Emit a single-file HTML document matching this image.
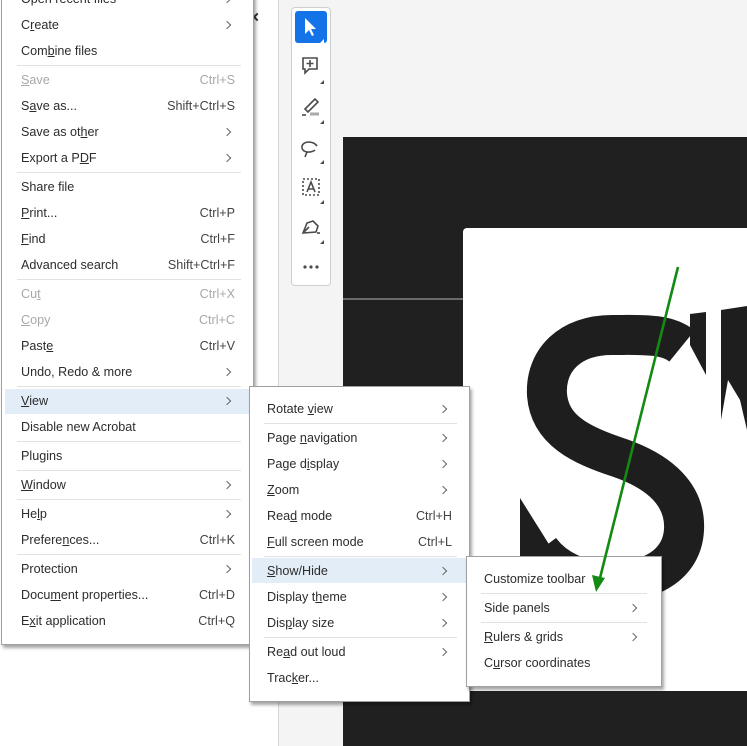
<!DOCTYPE html>
<html><head><meta charset="utf-8"><style>
*{margin:0;padding:0;box-sizing:border-box}
body{width:747px;height:746px;overflow:hidden;position:relative;background:#f4f4f4;font-family:"Liberation Sans",sans-serif;font-size:12.6px;color:#2c2c2c}
.abs{position:absolute}
.menu{position:absolute;background:#fff;border:1px solid #a0a0a0;box-shadow:2px 3px 3px rgba(0,0,0,.35)}
.r{position:absolute;left:0;right:0;height:18px;line-height:18px;white-space:nowrap}
.r .t{position:absolute}
.r .k{position:absolute;color:#444}
.r .c{position:absolute;width:6px;height:6px;border-right:1.6px solid #666;border-top:1.6px solid #666;transform:rotate(45deg);top:6px}
.d{color:#a8a8a8}
.d .k{color:#a8a8a8}
.s{position:absolute;height:1px;background:#e2e2e2}
.hl{position:absolute;background:#e3edf8}
u{text-decoration:underline;text-underline-offset:1px}
</style></head><body>
<div class="abs" style="left:0;top:0;width:279px;height:746px;background:#fff;border-right:1px solid #d6d6d6"></div>
<div class="abs" style="left:254px;top:14px;width:6px;height:6px;border-left:2px solid #333;border-bottom:2px solid #333;transform:rotate(45deg)"></div>

<div class="abs" style="left:343px;top:137px;width:404px;height:609px;background:#202020"></div>
<div class="abs" style="left:343px;top:298px;width:120px;height:2px;background:#6a6a6a"></div>
<div class="abs" style="left:463px;top:228px;width:284px;height:463px;background:#fff;border-radius:4px 0 0 3px"></div>
<svg class="abs" style="left:0;top:0" width="747" height="746">
<path d="M682,346 C666,333 640,335 612,335 C570,335 545,360 547,395 C550,430 580,445 620,458 C660,472 686,495 684,530 C682,565 650,582 612,582 C580,582 555,570 540,550" fill="none" stroke="#1e1e1e" stroke-width="40"/>
<path d="M520,498 L520,565 L562,565 Z" fill="#1e1e1e"/>
<path d="M690,314 L706,312 L706,375 L690,345 Z" fill="#1e1e1e"/>
<path d="M721,310 L747,306 L747,430 L740,400 L728,380 L721,420 Z" fill="#1e1e1e"/>
</svg>

<div class="abs" style="left:291px;top:7px;width:40px;height:279px;background:#fff;border:1px solid #cfcfcf;border-radius:4px"></div>
<div class="abs" style="left:295px;top:11px;width:32px;height:32px;background:#1473e6;border-radius:3px"></div>
<svg class="abs" style="left:291px;top:7px" width="40" height="279" fill="none" stroke="#4b4b4b" stroke-width="1.6">
<path d="M14,11 L14,27 L18,23 L21,29 L23,28 L20,22 L25,22 Z" fill="#fff" stroke="none"/>
<path d="M33,32 L33,36 L29,36 Z" fill="#fff" stroke="none"/>
<path d="M12,51 h14 v11 h-8 l-4,4 v-4 h-2 z"/><path d="M19,53 v7 M15.5,56.5 h7"/>
<path d="M33,73 L33,77 L29,77 Z" fill="#4b4b4b" stroke="none"/>
<path d="M14,102 L24,92 L27,95 L17,105 Z"/><path d="M11,108 h4" /><path d="M19,107 h9" stroke="#aaa" stroke-width="3"/>
<path d="M33,113 L33,117 L29,117 Z" fill="#4b4b4b" stroke="none"/>
<path d="M26,139 C22,133 10,134 11,141 C12,146 20,146 24,143 M16,145 L14,150"/>
<path d="M33,153 L33,157 L29,157 Z" fill="#4b4b4b" stroke="none"/>
<path d="M12,172 h16 v16 h-16 z" stroke-dasharray="2 2"/><path d="M16,185 L20,175 L24,185 M17.5,182 h5"/>
<path d="M33,193 L33,197 L29,197 Z" fill="#4b4b4b" stroke="none"/>
<path d="M12,226 L16,216 L22,214 L27,219 L25,225 Z M12,226 L18,220"/><path d="M26,226 l3,0"/>
<path d="M33,233 L33,237 L29,237 Z" fill="#4b4b4b" stroke="none"/>
<circle cx="14" cy="260" r=".8" fill="#4b4b4b"/><circle cx="20" cy="260" r=".8" fill="#4b4b4b"/><circle cx="26" cy="260" r=".8" fill="#4b4b4b"/>
</svg>

<div class="menu" style="left:1px;top:-20px;width:253px;height:665px">
<div style="position:relative;top:20px">
<div class="r" style="top:-11px"><span class="t" style="left:19px">Open recent files</span><i class="c" style="left:222px"></i></div>
<div class="r" style="top:15px"><span class="t" style="left:19px">C<u>r</u>eate</span><i class="c" style="left:222px"></i></div>
<div class="r" style="top:41px"><span class="t" style="left:19px">Com<u>b</u>ine files</span></div>
<div class="s" style="left:15px;width:224px;top:64px"></div>
<div class="r d" style="top:70px"><span class="t" style="left:19px"><u>S</u>ave</span><span class="k" style="right:18px">Ctrl+S</span></div>
<div class="r" style="top:96px"><span class="t" style="left:19px">S<u>a</u>ve as...</span><span class="k" style="right:18px">Shift+Ctrl+S</span></div>
<div class="r" style="top:122px"><span class="t" style="left:19px">Save as ot<u>h</u>er</span><i class="c" style="left:222px"></i></div>
<div class="r" style="top:148px"><span class="t" style="left:19px">Export a P<u>D</u>F</span><i class="c" style="left:222px"></i></div>
<div class="s" style="left:15px;width:224px;top:171px"></div>
<div class="r" style="top:177px"><span class="t" style="left:19px">Share file</span></div>
<div class="r" style="top:203px"><span class="t" style="left:19px"><u>P</u>rint...</span><span class="k" style="right:18px">Ctrl+P</span></div>
<div class="r" style="top:229px"><span class="t" style="left:19px"><u>F</u>ind</span><span class="k" style="right:18px">Ctrl+F</span></div>
<div class="r" style="top:255px"><span class="t" style="left:19px">Advanced search</span><span class="k" style="right:18px">Shift+Ctrl+F</span></div>
<div class="s" style="left:15px;width:224px;top:278px"></div>
<div class="r d" style="top:284px"><span class="t" style="left:19px">Cu<u>t</u></span><span class="k" style="right:18px">Ctrl+X</span></div>
<div class="r d" style="top:310px"><span class="t" style="left:19px"><u>C</u>opy</span><span class="k" style="right:18px">Ctrl+C</span></div>
<div class="r" style="top:336px"><span class="t" style="left:19px">Past<u>e</u></span><span class="k" style="right:18px">Ctrl+V</span></div>
<div class="r" style="top:362px"><span class="t" style="left:19px">Undo, Redo &amp; more</span><i class="c" style="left:222px"></i></div>
<div class="s" style="left:15px;width:224px;top:385px"></div>
<div class="hl" style="left:3px;width:248px;top:388px;height:25px"></div>
<div class="r" style="top:391px"><span class="t" style="left:19px"><u>V</u>iew</span><i class="c" style="left:222px"></i></div>
<div class="r" style="top:417px"><span class="t" style="left:19px">Disable new Acrobat</span></div>
<div class="s" style="left:15px;width:224px;top:440px"></div>
<div class="r" style="top:446px"><span class="t" style="left:19px">Plugins</span></div>
<div class="s" style="left:15px;width:224px;top:469px"></div>
<div class="r" style="top:475px"><span class="t" style="left:19px"><u>W</u>indow</span><i class="c" style="left:222px"></i></div>
<div class="s" style="left:15px;width:224px;top:498px"></div>
<div class="r" style="top:504px"><span class="t" style="left:19px">He<u>l</u>p</span><i class="c" style="left:222px"></i></div>
<div class="r" style="top:530px"><span class="t" style="left:19px">Prefere<u>n</u>ces...</span><span class="k" style="right:18px">Ctrl+K</span></div>
<div class="s" style="left:15px;width:224px;top:553px"></div>
<div class="r" style="top:559px"><span class="t" style="left:19px">Protection</span><i class="c" style="left:222px"></i></div>
<div class="r" style="top:585px"><span class="t" style="left:19px">Docu<u>m</u>ent properties...</span><span class="k" style="right:18px">Ctrl+D</span></div>
<div class="r" style="top:611px"><span class="t" style="left:19px">E<u>x</u>it application</span><span class="k" style="right:18px">Ctrl+Q</span></div>
</div></div>

<div class="menu" style="left:249px;top:386px;width:221px;height:316px">
<div class="r" style="top:13px"><span class="t" style="left:17px">Rotate <u>v</u>iew</span><i class="c" style="left:190px"></i></div>
<div class="s" style="left:14px;width:193px;top:36px"></div>
<div class="r" style="top:42px"><span class="t" style="left:17px">Page <u>n</u>avigation</span><i class="c" style="left:190px"></i></div>
<div class="r" style="top:68px"><span class="t" style="left:17px">Page d<u>i</u>splay</span><i class="c" style="left:190px"></i></div>
<div class="r" style="top:94px"><span class="t" style="left:17px"><u>Z</u>oom</span><i class="c" style="left:190px"></i></div>
<div class="r" style="top:120px"><span class="t" style="left:17px">Rea<u>d</u> mode</span><span class="k" style="right:17px">Ctrl+H</span></div>
<div class="r" style="top:146px"><span class="t" style="left:17px"><u>F</u>ull screen mode</span><span class="k" style="right:17px">Ctrl+L</span></div>
<div class="s" style="left:14px;width:193px;top:169px"></div>
<div class="hl" style="left:2px;width:217px;top:171px;height:25px"></div>
<div class="r" style="top:175px"><span class="t" style="left:17px"><u>S</u>how/Hide</span><i class="c" style="left:190px"></i></div>
<div class="r" style="top:201px"><span class="t" style="left:17px">Display t<u>h</u>eme</span><i class="c" style="left:190px"></i></div>
<div class="r" style="top:227px"><span class="t" style="left:17px">Dis<u>p</u>lay size</span><i class="c" style="left:190px"></i></div>
<div class="s" style="left:14px;width:193px;top:250px"></div>
<div class="r" style="top:256px"><span class="t" style="left:17px">Re<u>a</u>d out loud</span><i class="c" style="left:190px"></i></div>
<div class="r" style="top:282px"><span class="t" style="left:17px">Trac<u>k</u>er...</span></div>
</div>

<div class="menu" style="left:466px;top:556px;width:196px;height:131px">
<div class="r" style="top:13px"><span class="t" style="left:17px">Customize toolbar</span></div>
<div class="s" style="left:14px;width:166px;top:36px"></div>
<div class="r" style="top:42px"><span class="t" style="left:17px">Side panels</span><i class="c" style="left:163px"></i></div>
<div class="s" style="left:14px;width:166px;top:65px"></div>
<div class="r" style="top:71px"><span class="t" style="left:17px"><u>R</u>ulers &amp; grids</span><i class="c" style="left:163px"></i></div>
<div class="r" style="top:97px"><span class="t" style="left:17px">C<u>u</u>rsor coordinates</span></div>
</div>

<svg class="abs" style="left:0;top:0;z-index:5" width="747" height="746">
<line x1="678" y1="267" x2="600" y2="578" stroke="#138a13" stroke-width="2.6"/>
<path d="M596,592 L592,575 L605,578 Z" fill="#138a13"/>
</svg>
</body></html>
